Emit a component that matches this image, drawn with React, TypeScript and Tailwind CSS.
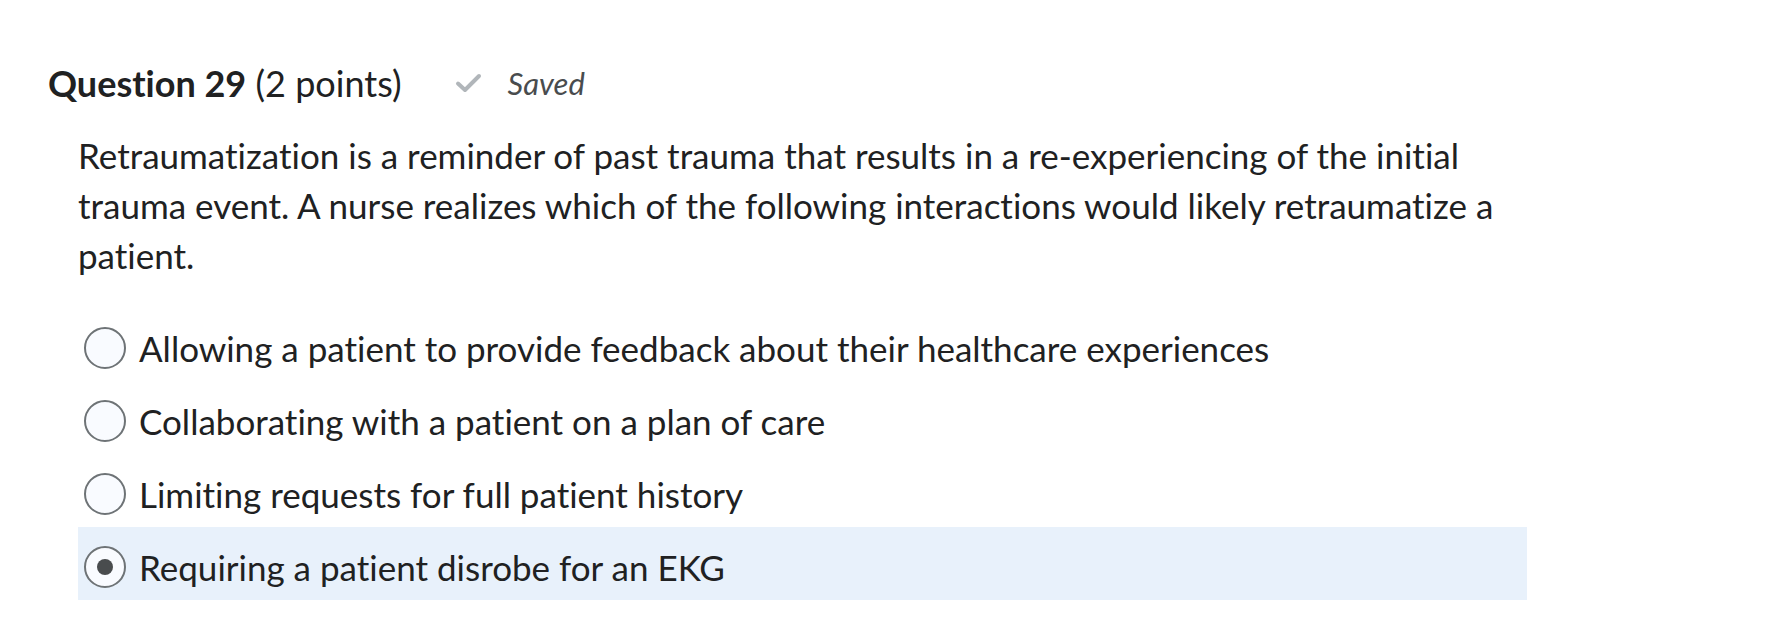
import { useState } from "react";

const options = [
  "Allowing a patient to provide feedback about their healthcare experiences",
  "Collaborating with a patient on a plan of care",
  "Limiting requests for full patient history",
  "Requiring a patient disrobe for an EKG",
];

function Radio({ checked }: { checked: boolean }) {
  return (
    <span className="flex h-[42px] w-[42px] shrink-0 items-center justify-center rounded-full border-2 border-[#6e7376] bg-[#f9fbff]">
      {checked && <span className="h-[16px] w-[16px] rounded-full bg-[#494c4e]" />}
    </span>
  );
}

export default function App() {
  const [selected, setSelected] = useState(3);

  return (
    <div className="min-h-screen bg-white pt-[61px] pl-[48px] font-['Lato','Noto_Sans',sans-serif] text-[#202122] [font-variant-ligatures:none]">
      <div className="flex h-[44px] items-center">
        <h2 className="text-[36px] leading-[44px]">
          <span className="font-bold">Question 29</span> (2 points)
        </h2>
        <svg
          className="ml-[53px]"
          width="27"
          height="22"
          viewBox="0 0 27 22"
          fill="none"
          aria-hidden="true"
        >
          <path
            d="M3 11.5 L10 18 L24 4"
            stroke="#b1b6ba"
            strokeWidth="4"
            strokeLinecap="round"
            strokeLinejoin="round"
          />
        </svg>
        <span className="ml-[26px] text-[31px] italic text-[#494c4e]">Saved</span>
      </div>

      <div className="ml-[30px] w-[1449px]">
        <p className="mt-[25px] text-[35px] leading-[50px]">
          Retraumatization is a reminder of past trauma that results in a re-experiencing of the
          initial trauma event. A nurse realizes which of the following interactions would likely
          retraumatize a patient.
        </p>

        <ul className="mt-[28px]">
          {options.map((o, i) => (
            <li
              key={o}
              onClick={() => setSelected(i)}
              className={`flex h-[73px] cursor-pointer items-center gap-[13px] pt-[7px] pl-[6px] ${
                selected === i ? "bg-[#e8f1fb]" : ""
              }`}
            >
              <Radio checked={selected === i} />
              <span className="text-[35px] leading-[44px]">{o}</span>
            </li>
          ))}
        </ul>
      </div>
    </div>
  );
}
